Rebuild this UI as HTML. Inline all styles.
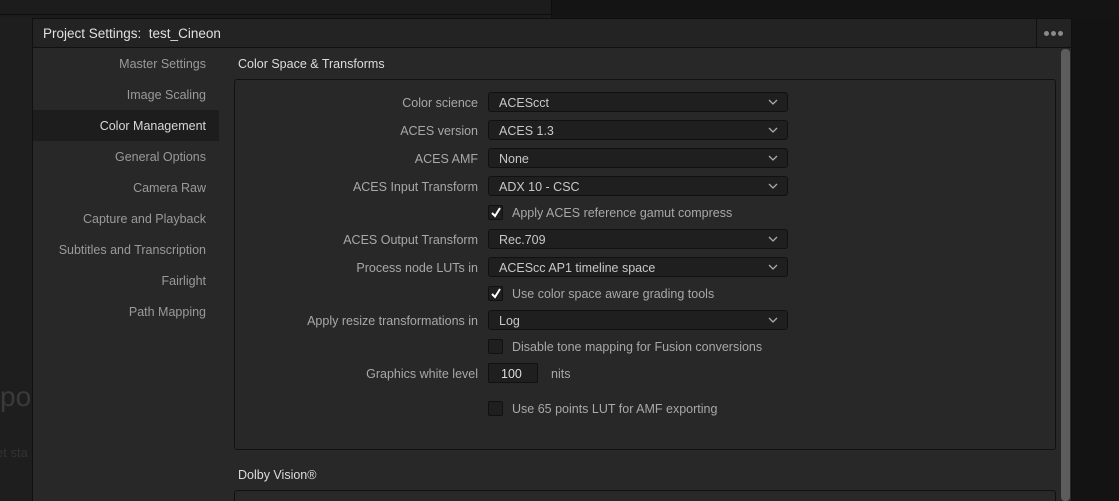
<!DOCTYPE html>
<html><head><style>
*{margin:0;padding:0;box-sizing:border-box}
html{overflow:hidden;width:1119px;height:501px}
body{width:1119px;height:501px;overflow:hidden;background:#1e1e1e;font-family:"Liberation Sans",sans-serif;font-size:12.5px;position:relative}
.a{position:absolute}
.lbl{position:absolute;right:641px;color:#a8a8a8;white-space:nowrap;text-align:right}
.dd{position:absolute;left:488px;width:300px;height:20px;background:#1f1f1f;border:1px solid #111;border-radius:3px;color:#c8c8c8;padding:3px 0 0 10px}
.dd svg{position:absolute;right:9px;top:6px}
.cb{position:absolute;left:488px;width:15px;height:15px;background:#1f1f1f;border:1px solid #111;border-radius:2px}
.ct{position:absolute;left:512px;color:#a8a8a8;white-space:nowrap}
.side{position:absolute;right:913px;color:#9a9a9a;white-space:nowrap}
.dot{position:absolute;top:31px;width:5px;height:5px;border-radius:50%;background:#8a8a8a}
</style></head><body>
<div class="a" style="left:0;top:0;width:551px;height:18px;background:#1c1c1c"></div>
<div class="a" style="left:0;top:14px;width:551px;height:1px;background:#0e0e0e"></div>
<div class="a" style="left:551px;top:0;width:568px;height:18px;background:#141414;border-left:1px solid #0e0e0e"></div>
<div class="a" style="left:1071px;top:18px;width:48px;height:483px;background:#131313"></div>
<div class="a" style="left:0;top:381px;color:#3a3a3a;font-size:28px">po</div>
<div class="a" style="left:-4px;top:445px;color:#333;font-size:13px">et sta</div>
<div class="a" style="left:32px;top:18px;width:1040px;height:483px;background:#282828;border:1px solid #101010;border-bottom:none;overflow:hidden">
<div class="a" style="left:201px;top:471px;width:822px;height:20px;border:1px solid #111;border-radius:3px"></div>
</div>
<div class="a" style="left:33px;top:19px;width:1038px;height:29px;background:#232323;border-bottom:1px solid #101010"></div>
<div class="a" style="left:43px;top:26px;color:#e0e0e0;font-size:13.5px">Project Settings:&nbsp; test_Cineon</div>
<div class="a" style="left:1036px;top:19px;width:1px;height:28px;background:#101010"></div>
<div class="dot" style="left:1044px"></div><div class="dot" style="left:1051px"></div><div class="dot" style="left:1058px"></div>
<div class="a" style="left:1061px;top:49px;width:9px;height:452px;background:#5c5c5c;border-radius:4px"></div>
<div class="a" style="left:33px;top:110px;width:186px;height:31px;background:#1d1d1d"></div>
<div class="side" style="top:57px">Master Settings</div>
<div class="side" style="top:88px">Image Scaling</div>
<div class="side" style="top:119px;color:#d8d8d8">Color Management</div>
<div class="side" style="top:150px">General Options</div>
<div class="side" style="top:181px">Camera Raw</div>
<div class="side" style="top:212px">Capture and Playback</div>
<div class="side" style="top:243px">Subtitles and Transcription</div>
<div class="side" style="top:274px">Fairlight</div>
<div class="side" style="top:305px">Path Mapping</div>
<div class="a" style="left:238px;top:57px;color:#dcdcdc">Color Space &amp; Transforms</div>
<div class="a" style="left:234px;top:79px;width:822px;height:371px;border:1px solid #111;border-radius:3px;background:#282828"></div>
<div class="a" style="left:238px;top:468px;color:#dcdcdc">Dolby Vision®</div>

<div class="lbl" style="top:96px">Color science</div><div class="dd" style="top:92px">ACEScct<svg width="10" height="6"><path d="M1 1l4 4 4-4" stroke="#aaa" fill="none" stroke-width="1.3"/></svg></div>
<div class="lbl" style="top:124px">ACES version</div><div class="dd" style="top:120px">ACES 1.3<svg width="10" height="6"><path d="M1 1l4 4 4-4" stroke="#aaa" fill="none" stroke-width="1.3"/></svg></div>
<div class="lbl" style="top:152px">ACES AMF</div><div class="dd" style="top:148px">None<svg width="10" height="6"><path d="M1 1l4 4 4-4" stroke="#aaa" fill="none" stroke-width="1.3"/></svg></div>
<div class="lbl" style="top:180px">ACES Input Transform</div><div class="dd" style="top:176px">ADX 10 - CSC<svg width="10" height="6"><path d="M1 1l4 4 4-4" stroke="#aaa" fill="none" stroke-width="1.3"/></svg></div>
<div class="cb" style="top:205px"><svg width="13" height="13"><path d="M3 7l3 3 5-8" stroke="#fff" fill="none" stroke-width="2"/></svg></div><div class="ct" style="top:206px">Apply ACES reference gamut compress</div>
<div class="lbl" style="top:233px">ACES Output Transform</div><div class="dd" style="top:229px">Rec.709<svg width="10" height="6"><path d="M1 1l4 4 4-4" stroke="#aaa" fill="none" stroke-width="1.3"/></svg></div>
<div class="lbl" style="top:261px">Process node LUTs in</div><div class="dd" style="top:257px">ACEScc AP1 timeline space<svg width="10" height="6"><path d="M1 1l4 4 4-4" stroke="#aaa" fill="none" stroke-width="1.3"/></svg></div>
<div class="cb" style="top:286px"><svg width="13" height="13"><path d="M3 7l3 3 5-8" stroke="#fff" fill="none" stroke-width="2"/></svg></div><div class="ct" style="top:287px">Use color space aware grading tools</div>
<div class="lbl" style="top:314px">Apply resize transformations in</div><div class="dd" style="top:310px">Log<svg width="10" height="6"><path d="M1 1l4 4 4-4" stroke="#aaa" fill="none" stroke-width="1.3"/></svg></div>
<div class="cb" style="top:339px"></div><div class="ct" style="top:340px">Disable tone mapping for Fusion conversions</div>
<div class="lbl" style="top:367px">Graphics white level</div>
<div class="a" style="left:488px;top:363px;width:50px;height:20px;background:#1f1f1f;border:1px solid #111;border-radius:2px;color:#ddd;padding:3px 0 0 12px">100</div>
<div class="a" style="left:551px;top:367px;color:#a8a8a8">nits</div>
<div class="cb" style="top:401px"></div><div class="ct" style="top:402px">Use 65 points LUT for AMF exporting</div>
</body></html>
